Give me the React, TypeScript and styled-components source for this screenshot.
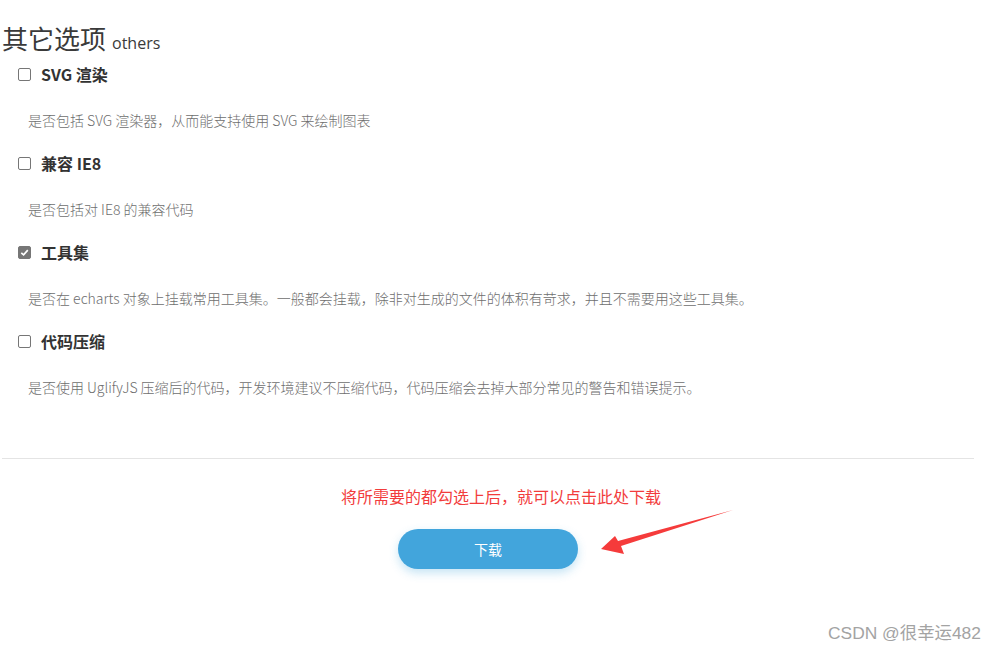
import React, { useState } from "react";
import styled, { createGlobalStyle } from "styled-components";

const Global = createGlobalStyle`
  html, body { margin: 0; padding: 0; background: #fff; }
  body { font-family: "Noto Sans CJK SC", "Noto Sans", sans-serif; }
`;

const Page = styled.div`
  position: relative;
  width: 994px;
  height: 651px;
  overflow: hidden;
`;

const Section = styled.div`
  padding-left: 2px;
  width: 972px;
`;

const Title = styled.h2`
  margin: 0;
  padding-top: 20px;
  height: 36px;
  display: flex;
  align-items: baseline;
  line-height: 36px;
  font-size: 26px;
  font-weight: 400;
  color: #3a3a3a;
`;

const TitleSub = styled.span`
  font-size: 16px;
  margin-left: 6px;
  font-family: "Open Sans", "Noto Sans", sans-serif;
`;

const List = styled.div`
  display: flex;
  flex-direction: column;
  padding-top: 6px;
`;

const Item = styled.div`
  display: flex;
  flex-direction: column;
  padding-bottom: 21px;
`;

const LabelRow = styled.label`
  display: flex;
  align-items: center;
  gap: 10px;
  height: 24px;
  padding-left: 16px;
  font-size: 16px;
  font-weight: 700;
  color: #333;
  cursor: pointer;
`;

const Box = styled.input`
  appearance: none;
  margin: 0;
  width: 13px;
  height: 13px;
  border: 1px solid #767676;
  border-radius: 2px;
  background: #fff;
  box-sizing: border-box;
  &:checked {
    background: #767676 url("data:image/svg+xml;utf8,<svg xmlns='http://www.w3.org/2000/svg' viewBox='0 0 12 12'><path d='M2.5 6.3 L5 8.6 L9.6 3.4' fill='none' stroke='white' stroke-width='1.8'/></svg>") center / 11px 11px no-repeat;
  }
`;

const Desc = styled.p`
  margin: 24px 0 0;
  padding-left: 26px;
  line-height: 20px;
  font-size: 14px;
  font-weight: 300;
  color: #6e6e6e;
`;

const Divider = styled.hr`
  margin: 40px 0 0;
  border: none;
  border-top: 1px solid #e4e4e4;
`;

const Footer = styled.div`
  display: flex;
  flex-direction: column;
  align-items: center;
  width: 976px;
`;

const Hint = styled.p`
  margin: 26px 0 0 26px;
  line-height: 22px;
  font-size: 16px;
  color: #f23c3c;
`;

const DownloadButton = styled.button`
  margin-top: 22px;
  width: 180px;
  height: 40px;
  border: none;
  border-radius: 20px;
  background: #42a5dc;
  color: #fff;
  font-family: "Noto Sans CJK SC", sans-serif;
  font-size: 14px;
  box-shadow: 0 4px 10px rgba(66, 165, 220, 0.3);
  cursor: pointer;
`;

const Arrow = styled.svg`
  position: absolute;
  left: 0;
  top: 0;
  pointer-events: none;
`;

const Watermark = styled.div`
  position: absolute;
  left: 828px;
  top: 621px;
  font-size: 17.4px;
  line-height: 24px;
  color: #a3a3a3;
  font-family: "Liberation Sans", "Noto Sans CJK SC", sans-serif;
  white-space: nowrap;
`;

const options = [
  { key: "svg", label: "SVG 渲染", desc: "是否包括 SVG 渲染器，从而能支持使用 SVG 来绘制图表", checked: false },
  { key: "ie8", label: "兼容 IE8", desc: "是否包括对 IE8 的兼容代码", checked: false },
  { key: "tool", label: "工具集", desc: "是否在 echarts 对象上挂载常用工具集。一般都会挂载，除非对生成的文件的体积有苛求，并且不需要用这些工具集。", checked: true },
  { key: "min", label: "代码压缩", desc: "是否使用 UglifyJS 压缩后的代码，开发环境建议不压缩代码，代码压缩会去掉大部分常见的警告和错误提示。", checked: false },
];

export default function App() {
  const [state, setState] = useState<Record<string, boolean>>(
    Object.fromEntries(options.map((o) => [o.key, o.checked]))
  );
  return (
    <Page>
      <Global />
      <Section>
        <Title>
          其它选项<TitleSub>others</TitleSub>
        </Title>
        <List>
          {options.map((o) => (
            <Item key={o.key}>
              <LabelRow>
                <Box
                  type="checkbox"
                  checked={state[o.key]}
                  onChange={() => setState((s) => ({ ...s, [o.key]: !s[o.key] }))}
                />
                {o.label}
              </LabelRow>
              <Desc>{o.desc}</Desc>
            </Item>
          ))}
        </List>
        <Divider />
      </Section>
      <Footer>
        <Hint>将所需要的都勾选上后，就可以点击此处下载</Hint>
        <DownloadButton>下载</DownloadButton>
      </Footer>
      <Arrow width="994" height="651" viewBox="0 0 994 651">
        <polygon
          points="601,549 615,536 618,541 733,510 621,546 624,554"
          fill="#f53b3b"
        />
      </Arrow>
      <Watermark>CSDN @很幸运482</Watermark>
    </Page>
  );
}
